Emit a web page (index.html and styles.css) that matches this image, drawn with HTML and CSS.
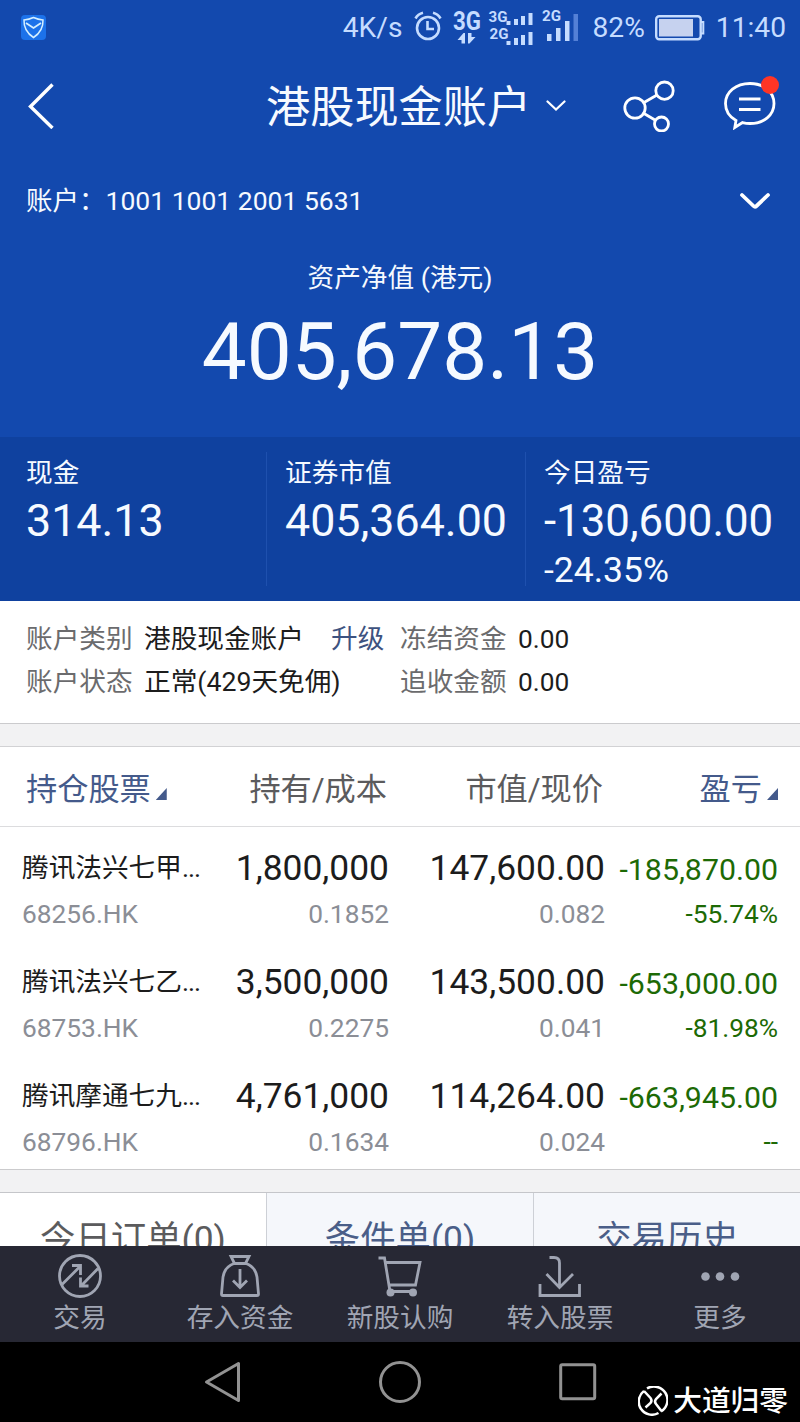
FILE: index.html
```
<!DOCTYPE html>
<html lang="zh-CN">
<head>
  <meta charset="UTF-8" />
  <meta name="viewport" content="width=device-width, initial-scale=1.0"/>
  <title>港股现金账户</title>
  <link rel="stylesheet" href="styles.css">
</head>
<body>
  <header class="top">
    <div class="status-bar">
      <svg class="guard" width="25" height="25" viewBox="0 0 25 25">
        <rect width="25" height="25" rx="4" fill="#1c72ea"/>
        <path d="M3 5 Q8 4.500 12.500 2.500 Q17 4.500 22 5 Q22.500 16 12.500 22.500 Q2.500 16 3 5Z" fill="none" stroke="#d5efff" stroke-width="1.500"/>
        <path d="M5 8 L12.500 13 L20 8" fill="none" stroke="#d5efff" stroke-width="1.800"/>
      </svg>
      <span class="speed">4K/s</span>
      <svg class="alarm" width="28" height="30" viewBox="0 0 28 30">
        <g fill="none" stroke="#c5dcff" stroke-width="2.600">
          <circle cx="14" cy="17" r="11"/>
          <path d="M1.500 7.500 Q4 3 9 1.800 M26.500 7.500 Q24 3 19 1.800 M13.500 10 V18 H20"/>
        </g>
      </svg>
      <svg class="network" width="128" height="44" viewBox="0 0 128 44">
        <g fill="#c5dcff" font-family="Roboto, sans-serif" font-weight="700">
          <text x="0" y="26" font-size="25" textLength="28" lengthAdjust="spacingAndGlyphs">3G</text>
          <text x="35.500" y="17.500" font-size="15" textLength="19" lengthAdjust="spacingAndGlyphs">3G</text>
          <text x="36.500" y="35" font-size="15" textLength="19" lengthAdjust="spacingAndGlyphs">2G</text>
          <text x="89" y="17" font-size="15" textLength="19" lengthAdjust="spacingAndGlyphs">2G</text>
          <path d="M12 29 V39.500 H8.500 V36 H4.500 L10.500 29Z M15 39.500 V29 H18.500 V33 H22.500 L16.500 39.500Z"/>
          <path d="M53.500 17h4v4h-4z M61 15h4v6h-4z M68 12h4v9h-4z M75.500 9h4v12h-4z"/>
          <path d="M53.500 37h4v4h-4z M61 34h4v7h-4z M68 31h4v10h-4z M75.500 28h4v13h-4z"/>
          <path d="M94 30h4.500v7h-4.500z M103 24h4.500v13h-4.500z M112 17h4.500v20h-4.500z"/>
          <path d="M120.500 10h4.500v27h-4.500z" fill="#5480d6"/>
        </g>
      </svg>
      <span class="percent">82%</span>
      <svg class="battery" width="50" height="26" viewBox="0 0 50 26">
        <rect x="1.200" y="1.200" width="44.500" height="23" rx="3" fill="none" stroke="#c5dcff" stroke-width="2.400"/>
        <rect x="4" y="4" width="34" height="17.500" fill="#c6d2ef"/>
        <path d="M46 7 H48.300 V18.500 H46" fill="none" stroke="#c5dcff" stroke-width="2"/>
      </svg>
      <span class="clock">11:40</span>
    </div>

    <div class="title-bar">
      <svg class="back" width="27" height="46" viewBox="0 0 27 46">
        <path d="M24.500 1.500 L2.500 23.500 L24.500 45" fill="none" stroke="#fff" stroke-width="3.400"/>
      </svg>
      <h1>港股现金账户</h1>
      <svg class="title-arrow" width="20" height="12" viewBox="0 0 20 12">
        <path d="M1.500 1.500 L10 9.500 L18.500 1.500" fill="none" stroke="#fff" stroke-width="2.200" stroke-linecap="round"/>
      </svg>
      <svg class="share" width="52" height="52" viewBox="0 0 52 52">
        <g fill="none" stroke="#fff" stroke-width="2.800">
          <circle cx="12" cy="28" r="10.200"/>
          <circle cx="41.500" cy="10.700" r="8.700"/>
          <circle cx="38.500" cy="44" r="7"/>
          <path d="M21 22.500 L34 15 M21 33.500 L32 40"/>
        </g>
      </svg>
      <div class="message">
        <svg width="52" height="48" viewBox="0 0 52 48">
          <path d="M12 38.500 C5 34.500 1.500 28.500 1.500 21.500 C1.500 10 12 1.500 26 1.500 C40 1.500 50 10 50 21.500 C50 33 40 41.500 26 41.500 C23.500 41.500 21 41.200 18.500 40.600 L10.800 45.500 Z" fill="none" stroke="#fff" stroke-width="2.800"/>
          <path d="M15 17 H36.500 M15 27.500 H36.500" stroke="#fff" stroke-width="2.800"/>
        </svg>
        <span class="dot"></span>
      </div>
    </div>

    <div class="account">
      <span>账户：1001 1001 2001 5631</span>
      <svg width="32" height="18" viewBox="0 0 32 18">
        <path d="M3 3 L14.500 14 Q16 15.400 17.500 14 L29 3" fill="none" stroke="#fff" stroke-width="3.800" stroke-linecap="round"/>
      </svg>
    </div>

    <div class="net">
      <div class="net-label">资产净值 (港元)</div>
      <div class="net-value">405,678.13</div>
    </div>

    <div class="summary">
      <div class="summary-item">
        <div class="label">现金</div>
        <div class="value">314.13</div>
      </div>
      <div class="summary-item">
        <div class="label">证券市值</div>
        <div class="value">405,364.00</div>
      </div>
      <div class="summary-item">
        <div class="label">今日盈亏</div>
        <div class="value change">-130,600.00</div>
        <div class="rate">-24.35%</div>
      </div>
    </div>
  </header>

  <main class="content">
    <section class="info">
      <span class="key">账户类别</span><span>港股现金账户</span><span class="link">升级</span><span class="key">冻结资金</span><span class="num">0.00</span>
      <span class="key">账户状态</span><span class="wide">正常(429天免佣)</span><span class="key">追收金额</span><span class="num">0.00</span>
    </section>

    <section class="holdings">
      <div class="row head">
        <div class="sort">持仓股票<i class="triangle"></i></div>
        <div>持有/成本</div>
        <div>市值/现价</div>
        <div class="sort">盈亏<i class="triangle"></i></div>
      </div>
      <div class="row">
        <div class="name">腾讯法兴七甲<span class="dots">...</span><small>68256.HK</small></div>
        <div>1,800,000<small>0.1852</small></div>
        <div>147,600.00<small>0.082</small></div>
        <div class="loss"><span>-185,870.00</span><small>-55.74%</small></div>
      </div>
      <div class="row">
        <div class="name">腾讯法兴七乙<span class="dots">...</span><small>68753.HK</small></div>
        <div>3,500,000<small>0.2275</small></div>
        <div>143,500.00<small>0.041</small></div>
        <div class="loss"><span>-653,000.00</span><small>-81.98%</small></div>
      </div>
      <div class="row">
        <div class="name">腾讯摩通七九<span class="dots">...</span><small>68796.HK</small></div>
        <div>4,761,000<small>0.1634</small></div>
        <div>114,264.00<small>0.024</small></div>
        <div class="loss"><span>-663,945.00</span><small>--</small></div>
      </div>
    </section>

    <section class="tabs">
      <div class="tab active">今日订单(0)</div>
      <div class="tab">条件单(0)</div>
      <div class="tab">交易历史</div>
    </section>
  </main>

  <nav class="toolbar">
    <div class="tool">
      <svg width="46" height="46" viewBox="0 0 46 46">
        <circle cx="23" cy="22" r="20.500"/>
        <path d="M5 30.500 L23 12.500 M15 11.500 H23.500 V21 M41 14.500 L24 32 M23.500 23.500 V32 H31.500"/>
      </svg>
      <span>交易</span>
    </div>
    <div class="tool">
      <svg width="46" height="46" viewBox="0 0 46 46">
        <path d="M14 2.500 H32 L28.500 9.500 H17.500 Z M17 9.500 H29 Q38.500 13 40 23 L41.500 40 Q41.500 41.500 40 41.500 H6 Q4.500 41.500 4.500 40 L6 23 Q7.500 13 17 9.500Z M23 15 V33 M16 26.500 L23 33.500 L30 26.500"/>
      </svg>
      <span>存入资金</span>
    </div>
    <div class="tool">
      <svg width="46" height="46" viewBox="0 0 46 46">
        <path d="M1.500 4 H7.500 L13 37.500 H38 M8 8.500 H43 L38.500 31 H12"/>
        <circle class="fill" cx="13.500" cy="38.500" r="4"/>
        <circle class="fill" cx="36" cy="38.500" r="4"/>
      </svg>
      <span>新股认购</span>
    </div>
    <div class="tool">
      <svg width="46" height="46" viewBox="0 0 46 46">
        <path d="M12.500 3.500 H17 Q22.500 3.500 22.500 9 V33 M9.500 20 L22.500 33.500 L36 20 M3 30 V41.500 H42.500 V30"/>
      </svg>
      <span>转入股票</span>
    </div>
    <div class="tool">
      <svg width="46" height="46" viewBox="0 0 46 46">
        <circle class="fill" cx="8.500" cy="22.500" r="4.300"/>
        <circle class="fill" cx="23" cy="22.500" r="4.300"/>
        <circle class="fill" cx="38" cy="22.500" r="4.300"/>
      </svg>
      <span>更多</span>
    </div>
  </nav>

  <footer class="system-nav">
    <svg class="sys-back" width="38" height="42" viewBox="0 0 38 42">
      <path d="M34.500 2.500 V39.500 L2.500 21 Z"/>
    </svg>
    <svg class="sys-home" width="44" height="44" viewBox="0 0 44 44">
      <circle cx="22" cy="22" r="19.500"/>
    </svg>
    <svg class="sys-recent" width="38" height="38" viewBox="0 0 38 38">
      <rect x="1.700" y="1.700" width="34" height="34" rx="1.500"/>
    </svg>
    <div class="watermark">
      <svg width="30" height="30" viewBox="0 0 30 30">
        <g fill="none" stroke="#fff" stroke-width="2.500">
          <path d="M9 2.500 A13.200 13.200 0 0 1 23 25.500 M20.500 27 A13.200 13.200 0 0 1 6 5"/>
          <path d="M6 5 L12.500 12 Q14.500 14.500 12.500 17 L7.500 21.500 M23.500 7.500 L18 13 Q16 15.500 18 18 L23.500 25"/>
        </g>
      </svg>
      <span>大道归零</span>
    </div>
  </footer>
</body>
</html>
```
FILE: styles.css
```
* {
  box-sizing: border-box;
}

body {
  margin: 0;
  height: 1422px;
  display: flex;
  flex-direction: column;
  overflow: hidden;
  background: #fff;
  color: #1c1c1c;
  font-family: Roboto, "Noto Sans CJK SC", sans-serif;
  font-size: 26.67px;
}

svg {
  display: block;
  flex: none;
}

.top {
  flex: none;
  height: 601px;
  background: #1349ae;
  color: #f6faff;
}

/* status bar */
.status-bar {
  height: 56px;
  padding: 0 14px 0 21px;
  display: flex;
  align-items: center;
  color: #c5dcff;
  font-size: 28.2px;
  line-height: 56px;
}

.guard {
  margin-top: -2px;
}

.speed {
  margin-left: auto;
}

.alarm {
  margin: -4px 11px 0 12px;
}

.network {
  margin-top: -4px;
  margin-right: 11px;
}

.battery {
  margin: 0 11px 0 10px;
}

/* title bar */
.title-bar {
  height: 100px;
  padding: 0 24px 0 28px;
  display: flex;
  align-items: center;
}

.title-bar h1 {
  margin: 4px 0 0 211px;
  font-size: 44.2px;
  font-weight: 400;
  line-height: 96px;
}

.title-arrow {
  margin-left: 15px;
}

.share {
  margin-left: auto;
}

.message {
  position: relative;
  margin-left: 49px;
}

.dot {
  position: absolute;
  top: -6px;
  right: -3px;
  width: 18px;
  height: 18px;
  border-radius: 50%;
  background: #ff3525;
}

.account {
  height: 90px;
  padding: 0 29px 0 26px;
  display: flex;
  align-items: center;
  justify-content: space-between;
  font-size: 26.5px;
}

.account span {
  height: 90px;
  line-height: 90px;
}

.net {
  height: 191px;
  padding-top: 10px;
  text-align: center;
}

.net-label {
  line-height: 44px;
}

.net-value {
  font-size: 80px;
  line-height: 105px;
}

.summary {
  height: 164px;
  padding: 15px 0;
  display: grid;
  grid-template-columns: 266px 259px 1fr;
  grid-template-rows: 134px;
  background: #0f419f;
}

.summary-item {
  padding-left: 18px;
  border-left: 1px solid #1e50ae;
}

.summary-item:first-child {
  padding-left: 26px;
  border-left: 0;
}

.label {
  line-height: 42px;
}

.value {
  font-size: 44.8px;
  line-height: 54px;
}

.change {
  font-size: 43.8px;
}

.rate {
  font-size: 35.5px;
  line-height: 44px;
}

.content {
  height: 645px;
  flex: none;
  overflow: hidden;
  background: #f2f2f3;
}

.info {
  height: 123px;
  padding: 17px 0 0 26px;
  display: grid;
  grid-template-columns: 118px 187px 69px 118px 1fr;
  grid-auto-rows: 43px;
  line-height: 43px;
  background: #fff;
  border-bottom: 1px solid #cbcbcd;
  white-space: nowrap;
}

.key {
  color: #6b6b6d;
}

.num {
  font-size: 26.3px;
}

.link {
  color: #3d5280;
}

.wide {
  grid-column: span 2;
}

.holdings {
  margin-top: 22px;
  background: #fff;
  border-top: 1px solid #d2d2d4;
  border-bottom: 1px solid #cbcbcd;
}

.row {
  height: 114px;
  padding: 18px 22px 0;
  display: grid;
  grid-template-columns: 190px 177px 216px 173px;
  font-size: 35.4px;
  line-height: 46px;
  text-align: right;
  white-space: nowrap;
}

.row small {
  display: block;
  font-size: 26.3px;
  color: #8b8e96;
}

.row .name {
  font-size: 26.67px;
  text-align: left;
}

.dots {
  letter-spacing: -1px;
}

.row .loss,
.loss small {
  color: #1d6a05;
}

.loss span {
  display: block;
  height: 46px;
  font-size: 30.3px;
  line-height: 49px;
}

.head {
  height: 80px;
  padding: 0 22px 0 26px;
  grid-template-columns: 184px 177px 216px 175px;
  font-size: 31.2px;
  line-height: 86px;
  color: #5b5b5d;
  border-bottom: 1px solid #dcdcde;
}

.sort {
  color: #445a8b;
}

.sort:first-child {
  text-align: left;
}

.triangle {
  display: inline-block;
  width: 11px;
  height: 12px;
  margin-left: 5px;
  background: #445a8b;
  clip-path: polygon(100% 0, 100% 100%, 0 100%);
}

.tabs {
  height: 92px;
  margin-top: 22px;
  display: grid;
  grid-template-columns: 266px 267px 267px;
  border-top: 1px solid #c5c6ca;
  font-size: 35.4px;
  line-height: 92px;
  text-align: center;
}

.tab {
  background: #f5f7fb;
  color: #4a5e88;
  border-left: 1px solid #cdd0d6;
}

.tab.active {
  background: #fff;
  color: #5b5b5d;
  border-left: 0;
}

/* bottom toolbar */
.toolbar {
  flex: none;
  height: 96px;
  display: grid;
  grid-template-columns: repeat(5, 1fr);
  background: #272834;
  color: #a0a5b3;
}

.tool {
  padding-top: 8px;
  display: flex;
  flex-direction: column;
  align-items: center;
  line-height: 37px;
}

.tool svg {
  fill: none;
  stroke: #a0a5b3;
  stroke-width: 2.8;
}

.tool .fill {
  fill: #a0a5b3;
  stroke: none;
}

.system-nav {
  flex: none;
  height: 80px;
  padding: 0 12px 0 204px;
  display: flex;
  align-items: center;
  background: #000;
}

.system-nav > svg {
  fill: none;
  stroke: #929292;
  stroke-width: 3;
  stroke-linejoin: round;
}

.sys-home {
  margin-left: 136px;
}

.sys-recent {
  margin-left: 137px;
}

.watermark {
  margin: 37px 0 0 auto;
  display: flex;
  align-items: center;
  gap: 5px;
  color: #fff;
  font-size: 28.7px;
  font-weight: 500;
  line-height: 40px;
}
```
